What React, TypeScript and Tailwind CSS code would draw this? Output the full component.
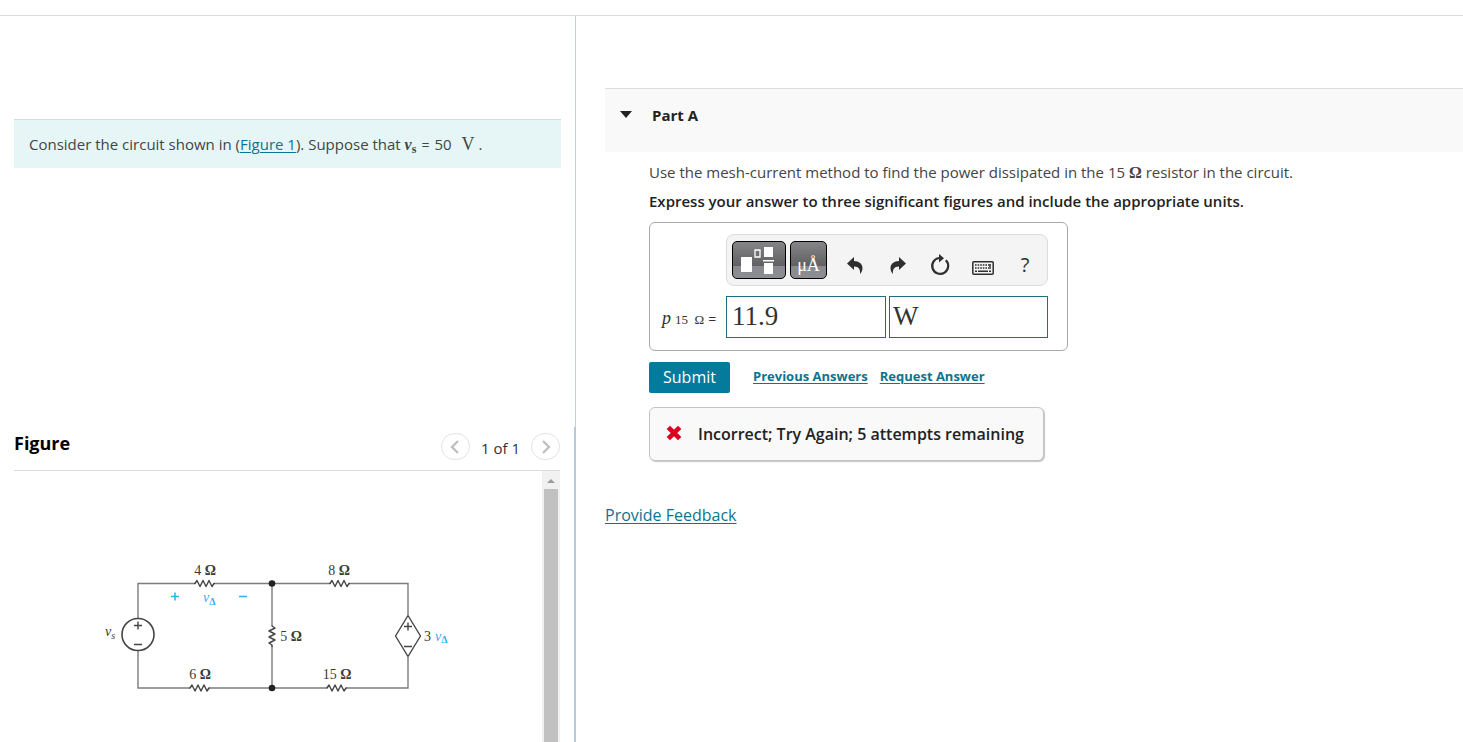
import type { ReactNode } from "react";

const LINK = "text-[#0b7490] underline underline-offset-2";
const SERIF = "font-['Liberation_Serif',serif]";

function ProblemStatement() {
  return (
    <p className="border-t border-[#d5dcdc] bg-[#e6f6f6] px-[15px] py-3 text-[15px] leading-6 text-[#3f4646]">
      Consider the circuit shown in (<a href="#figure" className={LINK}>Figure 1</a>). Suppose that{" "}
      <span className="font-['Liberation_Serif',serif] text-base leading-none font-bold italic">v</span>
      <sub className="font-['Liberation_Serif',serif] text-xs leading-none font-bold">s</sub>
      <span className="mx-[5px] text-sm leading-none">=</span>50
      <span className="ml-2.5 font-['Liberation_Serif',serif] text-lg leading-none">V</span> .
    </p>
  );
}

function Omega({ x, y, value }: { x: number; y: number; value: string }) {
  return (
    <text x={x} y={y} textAnchor="middle">
      {value} <tspan fontWeight="bold">Ω</tspan>
    </text>
  );
}

function Circuit() {
  return (
    <svg
      viewBox="0 0 360 150"
      width="360"
      height="150"
      role="img"
      aria-label="Circuit diagram"
      className={`${SERIF} shrink-0`}
      fontSize="14"
      fill="#3a3a3a"
    >
      <g fill="none" stroke="#7c7c7c" strokeWidth="1.4">
        <path d="M38 64V29.500H94M115 29.500H229M250 29.500H308V61M308 103V134H247M226 134H110M89 134H38V97" />
        <path d="M172 29V71M172 92V134" />
      </g>
      <g fill="none" stroke="#444" strokeWidth="1.4" strokeLinejoin="round">
        <path d="M94 29.500h1l2-3 3 6 3-6 3 6 3-6 3 6 2-3h1" />
        <path d="M229 29.500h1l2-3 3 6 3-6 3 6 3-6 3 6 2-3h1" />
        <path d="M89 134h1l2-3 3 6 3-6 3 6 3-6 3 6 2-3h1" />
        <path d="M226 134h1l2-3 3 6 3-6 3 6 3-6 3 6 2-3h1" />
        <path d="M172 71v1l3 2-6 3 6 3-6 3 6 3-6 3 3 2v2" />
        <circle cx="38" cy="80.500" r="16" strokeWidth="1.600" />
        <path d="M308 61.500L320.500 82 308 102.500 295.500 82Z" />
        <path d="M34 71.500h8M38 67.500v8M34 90.500h8M304 72.500h8M308 68.500v8M304 92.500h8" />
      </g>
      <circle cx="172" cy="29.500" r="3.300" fill="#222" />
      <circle cx="172" cy="134" r="3.300" fill="#222" />
      <Omega x={105} y={21} value="4" />
      <Omega x={239} y={21} value="8" />
      <Omega x={191} y={87} value="5" />
      <Omega x={100} y={125} value="6" />
      <Omega x={237} y={125} value="15" />
      <text x="5" y="82" fontStyle="italic">
        v<tspan fontSize="10" dy="3">s</tspan>
      </text>
      <text x="324" y="87">3</text>
      <g fill="#2bb3ec">
        <text x="103" y="48" fontStyle="italic">
          v<tspan fontSize="10" fontStyle="normal" fontWeight="bold" dy="3">Δ</tspan>
        </text>
        <text x="335" y="87" fontStyle="italic">
          v<tspan fontSize="10" fontStyle="normal" fontWeight="bold" dy="2">Δ</tspan>
        </text>
      </g>
      <path d="M71 42.500h8M75 38.500v8M139 42.500h8" stroke="#2bb3ec" strokeWidth="1.500" fill="none" />
    </svg>
  );
}

function PagerButton({ label, path }: { label: string; path: string }) {
  return (
    <button
      type="button"
      aria-label={label}
      className="flex h-[27px] w-[29px] items-center justify-center rounded-full border border-[#e2e2e2] bg-white"
    >
      <svg width="10" height="14" viewBox="0 0 10 14" fill="none" stroke="#bdbdbd" strokeWidth="2.200">
        <path d={path} />
      </svg>
    </button>
  );
}

function FigurePanel() {
  return (
    <section id="figure" className="flex flex-1 flex-col border-r-2 border-[#b9c8d6] pr-3.5 pl-3.5">
      <header className="flex h-11 items-start justify-between border-b border-[#dcdcdc]">
        <h2 className="pt-1 text-lg leading-6 font-bold text-black">Figure</h2>
        <div className="flex gap-[11px] pt-1.5">
          <PagerButton label="Previous figure" path="M8 1L2 7L8 13" />
          <span className="pt-[5px] text-[15px] leading-5 text-[#333]">1 of 1</span>
          <PagerButton label="Next figure" path="M2 1L8 7L2 13" />
        </div>
      </header>
      <div className="flex flex-1 justify-between overflow-hidden">
        <div className="overflow-hidden pt-[83px] pl-[86px]">
          <Circuit />
        </div>
        <div className="flex w-[18px] shrink-0 flex-col items-center bg-[#f1f1f1]">
          <svg width="18" height="18" viewBox="0 0 18 18" className="shrink-0">
            <path d="M5 12L9 8L13 12Z" fill="#9c9c9c" />
          </svg>
          <div className="w-3.5 flex-1 bg-[#c1c1c1]" />
        </div>
      </div>
    </section>
  );
}

function ToolButton({ label, children }: { label: string; children: ReactNode }) {
  return (
    <button type="button" aria-label={label} className="flex h-7 w-6 items-center justify-center text-[#2f2f2f]">
      {children}
    </button>
  );
}

const DARK_BUTTON =
  "flex h-[38px] items-center justify-center rounded-[5px] border border-black bg-[linear-gradient(#858588_0%,#606063_66%,#89898f_67%,#8d8d94_100%)]";

function Toolbar() {
  return (
    <div className="flex h-[52px] items-center gap-1 rounded-lg border border-[#dcdcdc] bg-[#f4f4f4] pr-2.5 pl-[5px]">
      <button type="button" aria-label="Templates" className={`${DARK_BUTTON} w-[54px] pr-0.5`}>
        <svg width="34" height="28" viewBox="0 0 34 28" fill="#fff">
          <path d="M0 11h11v15H0zM23 1h9v10H23zM23 17h9v11H23zM22 14h11v1.500H22z" />
          <path d="M14 4h5v7h-5z" fill="none" stroke="#fff" strokeWidth="1.300" />
        </svg>
      </button>
      <button type="button" className={`${DARK_BUTTON} w-[37px] pt-2.5 text-lg text-white ${SERIF}`}>
        μÅ
      </button>
      <div className="flex flex-1 items-center justify-between pt-2.5 pl-3">
        <ToolButton label="Undo">
          <svg width="16" height="17" viewBox="0 0 16 17" fill="currentColor">
            <path d="M0 6.500L7 0V4C12 4 15.500 7 15.500 11C15.500 13.500 14.500 15.500 13 17C13.500 12.500 12 9.500 7 9.500V13Z" />
          </svg>
        </ToolButton>
        <ToolButton label="Redo">
          <svg width="16" height="17" viewBox="0 0 16 17" fill="currentColor">
            <path d="M16 6.500L9 0V4C4 4 .5 7 .5 11C.5 13.500 1.500 15.500 3 17C2.500 12.500 4 9.500 9 9.500V13Z" />
          </svg>
        </ToolButton>
        <ToolButton label="Reset">
          <svg width="20" height="22" viewBox="0 0 20 22">
            <path d="M15.800 6.200A8 8 0 1 1 9 4" fill="none" stroke="currentColor" strokeWidth="2.200" />
            <path d="M9 0L14 4.200L9 8.500Z" fill="currentColor" />
          </svg>
        </ToolButton>
        <ToolButton label="Keyboard shortcuts">
          <svg width="22" height="14" viewBox="0 0 22 14" fill="none" stroke="currentColor" className="mt-1.5">
            <rect x=".8" y=".8" width="20.400" height="12.400" rx="1" strokeWidth="1.500" />
            <path d="M3 4h16M3 7h14" strokeWidth="1.600" strokeDasharray="1.600 1" />
            <path d="M18 3v5M3 10.300h2M6 10.300h10M17 10.300h2" strokeWidth="1.400" />
          </svg>
        </ToolButton>
        <ToolButton label="Help">
          <span className="text-xl leading-6">?</span>
        </ToolButton>
      </div>
    </div>
  );
}

const FIELD =
  "h-[42px] min-w-0 border border-[#1f6f80] bg-white pb-0.5 text-[27px] text-[#333] outline-none font-['Liberation_Serif',serif]";

function AnswerBox() {
  return (
    <div className="mt-[9px] flex w-[419px] max-w-full items-end rounded-md border border-[#a8a8a8] pt-[11px] pr-[19px] pb-3 pl-3">
      <label htmlFor="value" className="w-16 shrink-0 pb-2 text-sm leading-5 whitespace-nowrap text-[#333]">
        <span className="font-['Liberation_Serif',serif] text-lg leading-5 italic">p</span>
        <span className="mx-1 font-['Liberation_Serif',serif] text-[13px]">15&nbsp; Ω</span>=
      </label>
      <div className="min-w-0 flex-1">
        <Toolbar />
        <div className="mt-2.5 grid grid-cols-[160fr_159fr] gap-[3px]">
          <input id="value" defaultValue="11.9" className={`${FIELD} pl-[5px]`} />
          <input aria-label="Units" defaultValue="W" className={`${FIELD} pl-[3px]`} />
        </div>
      </div>
    </div>
  );
}

function PartA() {
  return (
    <main className="min-w-0 pt-[72px] pl-[29px]">
      <header className="h-16 border-t border-[#dcdcdc] bg-[#f9f9f9]">
        <button type="button" className="flex items-center gap-5 pt-3.5 pl-[15px] text-[15px] leading-6 font-bold text-[#222]">
          <svg width="12" height="7" viewBox="0 0 12 7" fill="currentColor" className="-mt-0.5">
            <path d="M0 0H12L6 7Z" />
          </svg>
          Part A
        </button>
      </header>
      <div className="pl-11">
        <p className="pt-2 text-[15px] leading-6 text-[#444]">
          Use the mesh-current method to find the power dissipated in the 15{" "}
          <span className="font-['Liberation_Serif',serif] text-base leading-none font-bold">Ω</span> resistor in the circuit.
        </p>
        <p className="pt-[5px] text-[15px] leading-6 font-semibold text-[#222]">
          Express your answer to three significant figures and include the appropriate units.
        </p>
        <AnswerBox />
        <div className="mt-[11px] flex items-center">
          <button type="button" className="h-[31px] w-[81px] rounded-xs bg-[#047a9c] pb-0.5 text-base text-white">
            Submit
          </button>
          <a href="#previous" className={`${LINK} ml-[23px] pb-0.5 text-[13px] font-bold`}>
            Previous Answers
          </a>
          <a href="#request" className={`${LINK} ml-3 pb-0.5 text-[13px] font-bold`}>
            Request Answer
          </a>
        </div>
        <div className="mt-3.5 flex h-[54px] w-[395px] max-w-full items-center gap-4 rounded-md border border-[#c4c4c4] bg-[#f9f9f9] pl-4 text-base font-semibold whitespace-nowrap text-[#222] shadow-[1px_1px_1px_#c4c4c4]">
          <svg width="16" height="16" viewBox="0 0 15 15" className="mb-0.5 shrink-0">
            <path d="M2.200 2.200L12.800 12.800M12.800 2.200L2.200 12.800" stroke="#db0020" strokeWidth="4.400" />
          </svg>
          Incorrect; Try Again; 5 attempts remaining
        </div>
      </div>
      <a href="#feedback" className={`${LINK} mt-[42px] inline-block text-base leading-6`}>
        Provide Feedback
      </a>
    </main>
  );
}

export default function App() {
  return (
    <div className="flex min-h-screen flex-col bg-white font-['Open_Sans','Noto_Sans',sans-serif]">
      <div className="h-4 border-b border-[#dcdcdc]" />
      <div className="grid flex-1 grid-cols-[576fr_887fr]">
        <div className="flex min-w-0 flex-col">
          <section className="h-[411px] border-r border-[#c4cdd5] pt-[103px] pr-3.5 pl-3.5">
            <ProblemStatement />
          </section>
          <FigurePanel />
        </div>
        <PartA />
      </div>
    </div>
  );
}
